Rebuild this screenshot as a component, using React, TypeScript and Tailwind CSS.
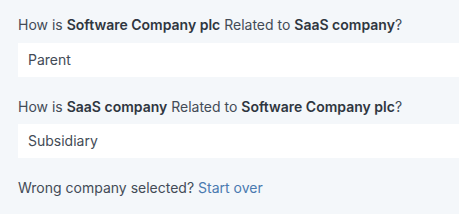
export default function App() {
  return (
    <div className="min-h-screen bg-[#f4f7fa] pl-[18px] pt-[15px] font-['Inter',sans-serif] text-[14px] leading-[20px] text-[#434b56]">
      <div className="flex flex-col">
        <p>
          How is <span className="font-semibold text-[#2f3640]">Software Company plc</span> Related to{' '}
          <span className="font-semibold text-[#2f3640]">SaaS company</span>?
        </p>
        <div className="mt-[8px] flex h-[34px] w-[460px] items-center bg-white pl-[10px]">Parent</div>

        <p className="mt-[20px]">
          How is <span className="font-semibold text-[#2f3640]">SaaS company</span> Related to{' '}
          <span className="font-semibold text-[#2f3640]">Software Company plc</span>?
        </p>
        <div className="mt-[7px] flex h-[34px] w-[460px] items-center bg-white pl-[10px]">Subsidiary</div>

        <p className="mt-[20px]">
          Wrong company selected? <a href="#" className="text-[#4a7ab0]">Start over</a>
        </p>
      </div>
    </div>
  );
}
